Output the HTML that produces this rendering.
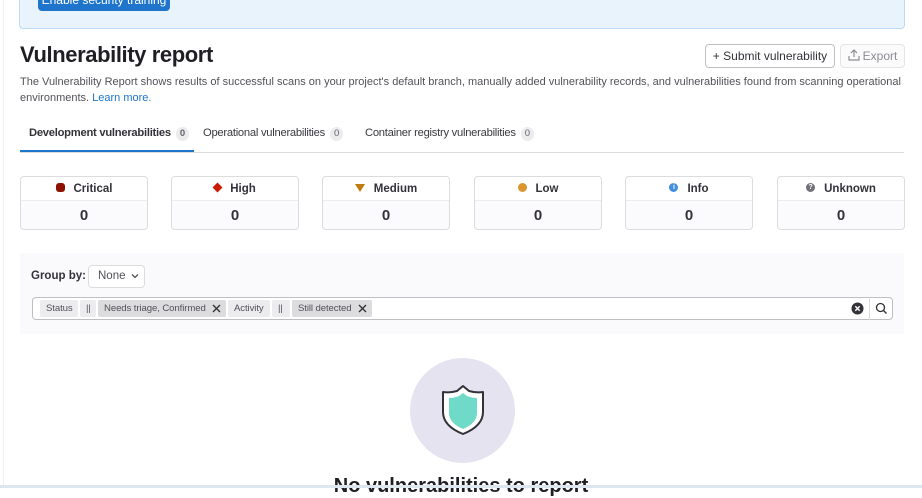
<!DOCTYPE html>
<html><head><meta charset="utf-8">
<style>
*{box-sizing:border-box;margin:0;padding:0}
body{width:922px;height:488px;overflow:hidden;background:#fff;font-family:"Liberation Sans",sans-serif;color:#333238;position:relative}
.abs{position:absolute}
.banner{left:19px;top:-12px;width:886px;height:41px;background:#e9f3fc;border:1px solid #bcdaf5;border-radius:4px}
.bbtn{left:38px;top:-14px;width:132px;height:25px;background:#1f75cb;border-radius:4px;color:#fff;font-size:12px;text-align:center;line-height:28px}
h1{position:absolute;left:20px;top:42px;font-size:22px;font-weight:bold;color:#1f1e24;letter-spacing:-0.4px}
.desc{left:20px;top:74px;width:890px;font-size:11px;line-height:16px;color:#535158}
.desc a{color:#1f75cb;text-decoration:none}
.btn{top:44px;height:24px;border:1px solid #bfbfc3;border-radius:4px;font-size:12px;line-height:22px;background:#fff;text-align:center}
.tab{top:127px;font-size:11.2px;color:#3a383f;letter-spacing:-0.25px}
.cnt{display:inline-block;background:#ececef;border-radius:8px;font-size:9.5px;color:#626168;padding:1px 4px;margin-left:5px;line-height:12px;letter-spacing:0}
.card{top:176px;width:128px;height:54px;border:1px solid #dcdcde;border-radius:4px;overflow:hidden}
.card .h{height:24px;border-bottom:1px solid #ececef;font-size:11.5px;font-weight:bold;text-align:center;line-height:24px;color:#333238;background:#fff}
.card .v{height:29px;background:#fbfafd;font-size:15px;font-weight:bold;text-align:center;line-height:29px;color:#333238}
.ic{display:inline-block;vertical-align:middle;margin-right:9px;position:relative;top:-1px}
.filt{left:20px;top:253px;width:884px;height:81px;background:#fafafc}
.tok{position:absolute;top:300px;background:#ececef;font-size:9.6px;color:#535158;height:17px;line-height:17px;padding-left:6px;border-radius:2px;white-space:nowrap;letter-spacing:-0.1px}
.tok.d{background:#dcdcde}
.tok svg{position:absolute;right:5px;top:4px}
</style></head><body>
<div class="abs" style="left:3px;top:0;width:1px;height:488px;background:#eee"></div>
<div class="abs banner"></div>
<div class="abs bbtn">Enable security training</div>
<h1>Vulnerability report</h1>
<div class="abs btn" style="left:705px;width:130px">+ Submit vulnerability</div>
<div class="abs btn" style="left:840px;width:65px;border-color:#e4e4e7;color:#8d8c93;background:#fbfbfb"><svg width="12" height="12" viewBox="0 0 12 12" style="vertical-align:-1px;margin-right:3px"><path d="M6 8V1M3 4l3-3 3 3M1 7v4h10V7" stroke="#8d8c93" stroke-width="1.2" fill="none"/></svg>Export</div>
<div class="abs desc">The Vulnerability Report shows results of successful scans on your project's default branch, manually added vulnerability records, and vulnerabilities found from scanning operational environments. <a>Learn more.</a></div>
<div class="abs tab" style="left:29px;font-weight:bold;color:#333238">Development vulnerabilities<span class="cnt">0</span></div>
<div class="abs tab" style="left:203px">Operational vulnerabilities<span class="cnt">0</span></div>
<div class="abs tab" style="left:365px">Container registry vulnerabilities<span class="cnt">0</span></div>
<div class="abs" style="left:20px;top:152px;width:884px;height:1px;background:#dcdcde"></div>
<div class="abs" style="left:20px;top:150px;width:174px;height:2px;background:#1f75cb"></div>

<div class="abs card" style="left:20px"><div class="h"><span class="ic" style="width:9px;height:9px;border-radius:3px;background:#8d1300"></span>Critical</div><div class="v">0</div></div>
<div class="abs card" style="left:171px"><div class="h"><span class="ic" style="width:7px;height:7px;transform:rotate(45deg);background:#c91c00"></span>High</div><div class="v">0</div></div>
<div class="abs card" style="left:322px"><div class="h"><span class="ic" style="width:0;height:0;border-left:5px solid transparent;border-right:5px solid transparent;border-top:8px solid #c17d10"></span>Medium</div><div class="v">0</div></div>
<div class="abs card" style="left:474px"><div class="h"><span class="ic" style="width:9px;height:9px;border-radius:50%;background:#d99530"></span>Low</div><div class="v">0</div></div>
<div class="abs card" style="left:625px"><div class="h"><span class="ic" style="width:9px;height:9px;border-radius:50%;background:#428fdc;color:#fff;font-size:7px;line-height:9px">i</span>Info</div><div class="v">0</div></div>
<div class="abs card" style="left:777px"><div class="h"><span class="ic" style="width:9px;height:9px;border-radius:50%;background:#737278;color:#fff;font-size:7px;line-height:9px">?</span>Unknown</div><div class="v">0</div></div>

<div class="abs filt"></div>
<div class="abs" style="left:31px;top:270px;font-size:11.5px;font-weight:bold;color:#333238">Group by:</div>
<div class="abs" style="left:88px;top:265px;width:57px;height:23px;border:1px solid #dcdcde;border-radius:4px;background:#fff;font-size:11.5px;line-height:21px;padding-left:9px;color:#535158">None <svg width="8" height="6" viewBox="0 0 8 6" style="margin-left:2px"><path d="M1 1.5l3 3 3-3" stroke="#535158" stroke-width="1.3" fill="none"/></svg></div>
<div class="abs" style="left:32px;top:297px;width:861px;height:23px;border:1px solid #bfbfc3;border-radius:4px;background:#fff"></div>
<div class="abs" style="left:869px;top:297px;width:1px;height:23px;background:#dcdcde"></div>
<div class="tok" style="left:40px;width:38px">Status</div>
<div class="tok" style="left:80px;width:16px">||</div>
<div class="tok d" style="left:98px;width:128px">Needs triage, Confirmed<svg width="9" height="9" viewBox="0 0 9 9"><path d="M1 1l7 7M8 1l-7 7" stroke="#333" stroke-width="1.4"/></svg></div>
<div class="tok" style="left:228px;width:42px">Activity</div>
<div class="tok" style="left:272px;width:18px">||</div>
<div class="tok d" style="left:292px;width:80px">Still detected<svg width="9" height="9" viewBox="0 0 9 9"><path d="M1 1l7 7M8 1l-7 7" stroke="#333" stroke-width="1.4"/></svg></div>
<svg class="abs" style="left:851px;top:302px" width="13" height="13" viewBox="0 0 13 13"><circle cx="6.5" cy="6.5" r="6" fill="#333238"/><path d="M4.3 4.3l4.4 4.4M8.7 4.3l-4.4 4.4" stroke="#fff" stroke-width="1.4"/></svg>
<svg class="abs" style="left:875px;top:302px" width="13" height="13" viewBox="0 0 13 13"><circle cx="5.5" cy="5.5" r="4" stroke="#333238" stroke-width="1.3" fill="none"/><path d="M8.5 8.5l3 3" stroke="#333238" stroke-width="1.4"/></svg>

<div class="abs" style="left:410px;top:358px;width:105px;height:105px;border-radius:50%;background:#e5e3f0"></div>
<svg class="abs" style="left:440px;top:384px" width="46" height="54" viewBox="0 0 46 54"><path d="M23 2 L29 7 Q36 9 43 8 L43 28 Q43 42 23 50 Q3 42 3 28 L3 8 Q10 9 17 7 Z" fill="#fff" stroke="#333238" stroke-width="2" stroke-linejoin="round"/><path d="M23 9 L27 12 Q32 14 37 14 L37 29 Q37 39 23 45 Q9 39 9 29 L9 14 Q14 14 19 12 Z" fill="#6fdac8"/></svg>
<div class="abs" style="left:0;width:922px;top:475px;text-align:center;font-size:20px;font-weight:bold;color:#1f1e24">No vulnerabilities to report</div>
<div class="abs" style="left:0;top:485px;width:922px;height:3px;background:#dbe6ef"></div>
</body></html>
